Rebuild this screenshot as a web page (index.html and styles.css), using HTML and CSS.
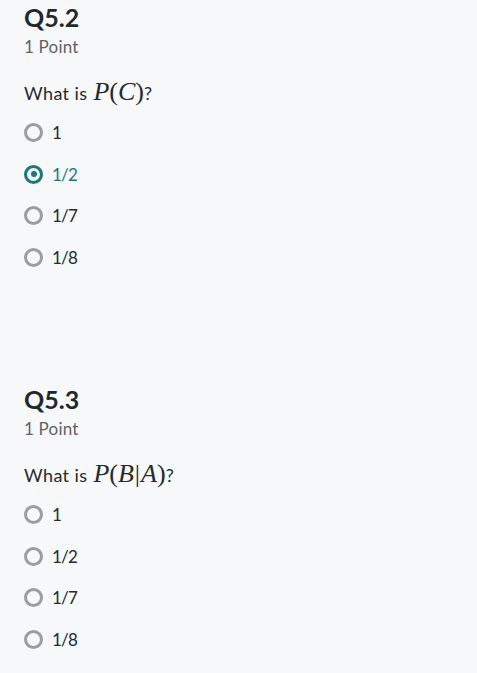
FILE: index.html
```html
<!doctype html>
<html>
<head>
<meta charset="utf-8">
<title>Q5</title>
<link rel="stylesheet" href="styles.css">
</head>
<body>
<div class="question">
	<h3>Q5.2</h3>
	<p class="points">1 Point</p>
	<p class="prompt">What is <span class="math"><i>P</i>(<i>C</i>)</span>?</p>
	<ul class="options">
		<li><span class="radio"></span>1</li>
		<li class="checked"><span class="radio"></span>1/2</li>
		<li><span class="radio"></span>1/7</li>
		<li><span class="radio"></span>1/8</li>
	</ul>
</div>
<div class="question">
	<h3>Q5.3</h3>
	<p class="points">1 Point</p>
	<p class="prompt">What is <span class="math"><i>P</i>(<i>B</i><span class="bar">|</span><i>A</i>)</span>?</p>
	<ul class="options">
		<li><span class="radio"></span>1</li>
		<li><span class="radio"></span>1/2</li>
		<li><span class="radio"></span>1/7</li>
		<li><span class="radio"></span>1/8</li>
	</ul>
</div>
</body>
</html>
```
FILE: styles.css
```css
*{margin:0;padding:0}
body{background:#f7f8fa;font-family:Lato,"Open Sans",sans-serif;color:#222c2e;padding:0 24px}
.question{height:382px}
.question:last-child{height:auto}
.question h3{font-size:25px;font-weight:700;line-height:30px;color:#1f2a2c;padding-top:2px}
.question .points{font-size:17px;line-height:22px;color:#5b6366;margin-top:4px;letter-spacing:0.2px}
.question .prompt{font-size:18px;line-height:30px;margin-top:19px;color:#222c2e;letter-spacing:0.4px}
.math{font-family:"Liberation Serif","DejaVu Serif",serif;font-size:26px;letter-spacing:0;margin-left:1px}
.math .bar{margin:0 1px}
.options{list-style:none;margin-top:4px}
.options li{display:flex;align-items:center;height:41.5px;font-size:17px;color:#222c2e;letter-spacing:-0.8px}
.radio{width:13px;height:13px;border:3px solid #989fa1;border-radius:50%;margin-right:9px;display:flex;align-items:center;justify-content:center}
.options .checked{color:#1c777c}
.options .checked .radio{border-color:#1c777c}
.options .checked .radio:after{content:"";width:6px;height:6px;border-radius:50%;background:#1c777c}
```
